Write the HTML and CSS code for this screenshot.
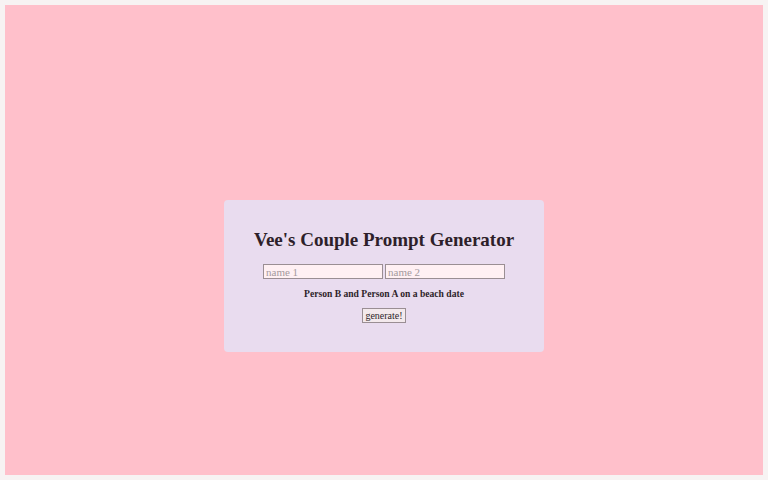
FILE: index.html
```html
<!DOCTYPE html>
<html lang="en">
<head>
<meta charset="utf-8">
<title>Vee's Couple Prompt Generator</title>
<link rel="stylesheet" href="styles.css">
</head>
<body>
  <main class="card">
    <h1 class="title">Vee's Couple Prompt Generator</h1>
    <div class="names">
      <input class="name-input" type="text" placeholder="name 1">
      <input class="name-input" type="text" placeholder="name 2">
    </div>
    <p class="prompt">Person B and Person A on a beach date</p>
    <button class="generate" type="button">generate!</button>
  </main>
</body>
</html>
```
FILE: styles.css
```css
html {
  background: #f7f3f3;
}

body {
  margin: 5px;
  height: 470px;
  background: #ffc0cb;
  font-family: "Liberation Serif", "Times New Roman", serif;
  color: #2e1f2a;
  display: flex;
  justify-content: center;
  align-items: flex-start;
  padding-top: 195px;
  box-sizing: border-box;
}

.card {
  width: 320px;
  box-sizing: border-box;
  background: #e9dcef;
  border-radius: 4px;
  padding: 28px 16px 29px;
  display: flex;
  flex-direction: column;
  align-items: center;
}

.title {
  margin: 0 0 12px;
  font-size: 19px;
  font-weight: bold;
  line-height: 24px;
}

.names {
  display: flex;
  gap: 2px;
}

.name-input {
  width: 120px;
  height: 15px;
  box-sizing: border-box;
  padding: 0 2px;
  border: 1px solid #9a8e93;
  background: #fff0f3;
  font-family: inherit;
  font-size: 11px;
  color: #2e1f2a;
}

.name-input::placeholder {
  color: #a49a9e;
}

.prompt {
  margin: 9px 0 8px;
  font-size: 9.6px;
  font-weight: bold;
  line-height: 12px;
}

.generate {
  height: 15px;
  padding: 0 2px;
  border: 1px solid #9a8e93;
  background: #f3e9ec;
  font-family: inherit;
  font-size: 10px;
  line-height: 13px;
  color: #2e1f2a;
}
```
